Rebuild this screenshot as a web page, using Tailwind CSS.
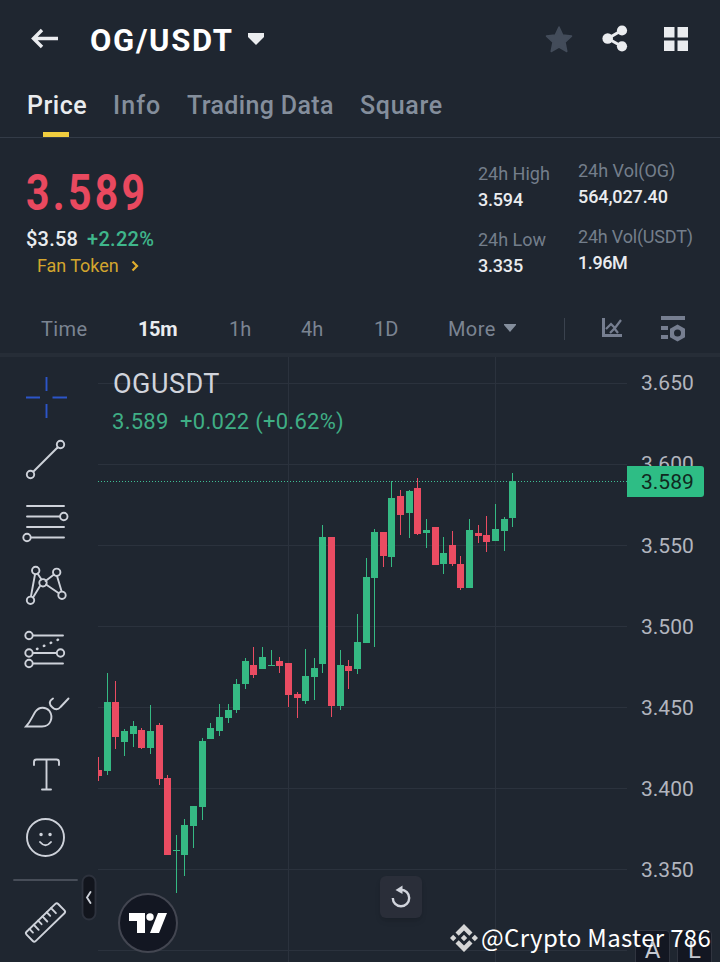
<!DOCTYPE html>
<html lang="en">
<head>
	<title>OG/USDT</title>
	<meta charset="UTF-8"/>
	<meta name="viewport" content="width=device-width, initial-scale=1.0"/>
	<script src="https://cdn.jsdelivr.net/npm/@tailwindcss/browser@4"></script>
</head>
<body class="relative flex h-[962px] w-[720px] flex-col overflow-hidden bg-[#1f2630] font-[Roboto,sans-serif] text-[#eaecef]">
	<!-- Header -->
	<header class="flex h-[78px] shrink-0 items-center pl-[30px] pr-[32px]">
		<svg class="h-6 w-[30px]" viewBox="0 0 30 24" fill="none" stroke="#eaecef" stroke-width="3.4"><path d="M28 11.500H4M12 3L3.500 11.500L12 20"/></svg>
		<h1 class="ml-[30px] w-[145px] whitespace-nowrap text-[31px] leading-[44px] font-bold tracking-[1.7px] text-white pt-[3px]">OG/USDT</h1>
		<svg class="ml-[12px] h-[14px] w-[18px]" viewBox="0 0 18 14" fill="#eaecef"><path d="M1 1h16v4L9 13L1 5z"/></svg>
		<div class="ml-auto flex items-center">
			<svg class="h-[28px] w-[28px]" viewBox="0 0 28 28" fill="#434c5a" stroke="#434c5a" stroke-width="1.5" stroke-linejoin="round"><path d="M14 2l3.700 8.100 8.800 1-6.500 6 1.800 9.400L14 22l-7.800 4.500 1.800-9.400-6.500-6 8.800-1z"/></svg>
			<svg class="ml-[28px] h-7 w-7" viewBox="0 0 28 28" fill="#eaecef"><path d="M20.500 5.500L7 13.500l14 8" fill="none" stroke="#eaecef" stroke-width="3"/><circle cx="21" cy="5.500" r="5.100"/><circle cx="6.700" cy="13.500" r="5.300"/><circle cx="21" cy="21.300" r="5.100"/></svg>
			<svg class="ml-[35px] h-6 w-6" viewBox="0 0 24 24" fill="#eaecef"><path d="M0 0h10.500v10.500H0zM13.500 0H24v10.500H13.500zM0 13.500h10.500V24H0zM13.500 13.500H24V24H13.500z"/></svg>
		</div>
	</header>

	<!-- Tabs -->
	<nav class="flex h-[60px] shrink-0 border-b border-[#333b47] pl-[27px] text-[25px] leading-[56px] font-medium whitespace-nowrap text-[#848e9c]">
		<div class="flex w-[86px] flex-col">
			<span class="h-[54px] tracking-[.5px] text-[#eaecef]">Price</span>
			<span class="ml-4 h-[5px] w-[26px] bg-[#f0cd3f]"></span>
		</div>
		<span class="w-[74px] tracking-[1.1px]">Info</span>
		<span class="w-[173px] tracking-[.35px]">Trading Data</span>
		<span class="tracking-[.7px]">Square</span>
	</nav>

	<!-- Price and 24h figures -->
	<section class="flex h-[162px] shrink-0">
		<div class="w-[478px] pl-[26px] pt-[25px]">
			<p class="h-[62px] origin-left scale-x-[.82] text-[50px] leading-[61px] font-bold tracking-[4px] text-[#e9495f]">3.589</p>
			<p class="flex h-[27px] text-[20px] leading-[29px] font-medium"><span class="w-[61px] tracking-[.2px]">$3.58</span><span class="tracking-[.3px] text-[#3fb68b]">+2.22%</span></p>
			<p class="flex h-[27px] items-center pl-[11px] text-[18px] leading-[27px] text-[#d3a52e]"><span class="w-[94px] tracking-[-.05px]">Fan Token</span><svg class="h-3 w-2" viewBox="0 0 8 12" fill="none" stroke="#e0ad2d" stroke-width="2.200"><path d="M1.500 1.500L6 6l-4.500 4.500"/></svg></p>
		</div>
		<dl class="w-[100px] pt-[23px] text-[18px] leading-[26px] whitespace-nowrap">
			<dt class="text-[#747e8b]">24h High</dt><dd class="mb-[14px] font-medium tracking-[-.2px]">3.594</dd>
			<dt class="text-[#747e8b]">24h Low</dt><dd class="font-medium tracking-[-.2px]">3.335</dd>
		</dl>
		<dl class="pt-[20px] text-[18px] leading-[26px] whitespace-nowrap">
			<dt class="text-[#747e8b]">24h Vol(OG)</dt><dd class="mb-[14px] font-medium tracking-[-.1px]">564,027.40</dd>
			<dt class="tracking-[-.2px] text-[#747e8b]">24h Vol(USDT)</dt><dd class="font-medium tracking-[-.4px]">1.96M</dd>
		</dl>
	</section>

	<!-- Intervals -->
	<nav class="flex h-[57px] shrink-0 items-center border-b-4 border-[#262d37] pl-[41px] text-[20px] text-[#7b8492] whitespace-nowrap pt-1">
		<span class="w-[97px] tracking-[.4px]">Time</span>
		<span class="w-[91px] font-bold tracking-[-.4px] text-[#eaecef]">15m</span>
		<span class="w-[72px]">1h</span>
		<span class="w-[73px]">4h</span>
		<span class="w-[74px]">1D</span>
		<span class="w-[56px] tracking-[.4px]">More</span>
		<svg class="h-[10px] w-3" viewBox="0 0 12 10" fill="#848e9c"><path d="M0 0h12v1L6 8L0 1z"/></svg>
		<span class="ml-[48px] h-[22px] w-px bg-[#3a424e]"></span>
		<svg class="ml-[36px] h-[22px] w-[22px]" viewBox="0 0 22 22" fill="none" stroke="#767e90" stroke-width="3"><path d="M2.500 0v17.500H21"/><path d="M5 11l5-5 4 4 6-8M9 15l4.500-4.500 3.500 4.500" stroke-width="2.200"/></svg>
		<svg class="ml-[37px] h-[28px] w-[26px]" viewBox="0 0 26 28" fill="#767e90"><path d="M1 1h24v4H1zM1 11h7v4H1zM1 20h7v4H1z"/><path fill-rule="evenodd" d="M17.500 9.500l7.500 4.300v8.400l-7.500 4.300-7.500-4.300v-8.400zM17.500 14.500a3.500 3.500 0 1 0 0 7 3.500 3.500 0 1 0 0-7z"/></svg>
	</nav>

	<main class="flex h-[605px] shrink-0">
		<!-- Drawing tools -->
		<svg class="h-[605px] w-[98px] shrink-0" viewBox="0 357 98 605" fill="none" stroke="#ced2da" stroke-width="1.900" stroke-linecap="round">
			<path d="M46.500 377v14M46.500 404v14M26 397.500h14M52.500 397.500h14.500" stroke="#2c55c8" stroke-linecap="butt"/>
			<path d="M33.500 471.500L57.500 447.500"/><circle cx="60.500" cy="444.500" r="3.700"/><circle cx="30.500" cy="474.500" r="3.700"/>
			<path d="M27 506h37M27 516.500h33M27 527h37M31 537.500h33"/><circle cx="63.800" cy="516.500" r="3.700"/><circle cx="27" cy="537.500" r="3.700"/>
			<path d="M35 574.500L31 596M37.500 573.500l4 6M40 586L33 597.500M45.500 581l8.500-6.500M57 576l4.500 15M46 584.500l12.500 8.500"/>
			<circle cx="35.700" cy="570.500" r="3.700"/><circle cx="56.700" cy="572.300" r="3.700"/><circle cx="43" cy="582.800" r="3.700"/><circle cx="30.500" cy="600.300" r="3.700"/><circle cx="62" cy="595.300" r="3.700"/>
			<path d="M33 635.500h30M33 653h23M33 663.500h30"/><path d="M37 649L63 637.500" stroke-width="2.500" stroke-dasharray="0.500 7"/>
			<circle cx="29" cy="635.500" r="3.700"/><circle cx="29" cy="653" r="3.700"/><circle cx="60.500" cy="653" r="3.700"/><circle cx="29" cy="663.500" r="3.700"/>
			<path d="M26 726.500C31 721 33 715 35.500 711.500C39 706.500 46 706.500 49.500 711C53.500 717 51 726.500 42 726.500zM53 698.500C48.500 701.500 49 704.500 52.500 707.500C55 710 58 710 60.500 707L68.500 698.500"/>
			<path d="M34 765v-3q0-2.500 2.500-2.500h20q2.500 0 2.500 2.500v3M46.500 760v29.500M42 789.500h9"/>
			<circle cx="45.500" cy="837.500" r="18.500"/><path d="M40 842q5.500 6.500 11 0"/><path d="M41 834.500h.1M50 834.500h.1" stroke-width="3.400"/>
			<path d="M14 880h63" stroke="#474d58"/>
			<rect x="82.500" y="875.500" width="13" height="44" rx="6.500" fill="#12151d" stroke="#2d323d"/><path d="M90.500 892l-3.500 5.500 3.500 5.500"/>
			<g transform="rotate(-44 45.500 922.500)"><rect x="23.500" y="916" width="44" height="13" rx="2"/><path d="M29.500 916v5M35.500 916v7M41.500 916v5M47.500 916v7M53.500 916v5M59.500 916v7"/></g>
		</svg>

		<!-- Candles -->
		<div class="relative w-[529px] shrink-0">
			<svg id="chart" class="h-[605px] w-[529px]" viewBox="98 357 529 605" shape-rendering="crispEdges">
				<path d="M98 383.500h529M98 464.500h529M98 545.500h529M98 626.500h529M98 707.500h529M98 788.500h529M98 869.500h529M98 950.500h529M288.500 357v605M495.500 357v605" stroke="#2b323d"/>
				<path d="M98 481.500h529" stroke="#3fbf94" stroke-dasharray="1 2"/>
			</svg>
			<p class="absolute left-[15px] top-[10px] text-[27px] leading-[34px] tracking-[.5px] text-[#d1d4dc]">OGUSDT</p>
			<p class="absolute left-[14px] top-[50px] text-[22px] leading-[30px] tracking-[.27px] whitespace-pre text-[#3fae85]">3.589  +0.022 (+0.62%)</p>
			<div class="absolute left-[20px] top-[536px] flex h-[60px] w-[60px] items-center justify-center rounded-full border-2 border-[#434651] bg-[#131722]">
				<svg class="h-5 w-[38px]" viewBox="0 0 38 20" fill="#fff"><path d="M0 0h16v20H8V8H0z"/><circle cx="21" cy="4" r="3.700"/><path d="M29 0h9l-8 20h-9z"/></svg>
			</div>
			<div class="absolute left-[282px] top-[519px] flex h-[42px] w-[42px] items-center justify-center rounded-md bg-[#2a2e39] shadow-md">
				<svg class="h-6 w-6" viewBox="0 0 24 24" fill="none" stroke="#d1d4dc" stroke-width="2.400"><path d="M3.800 13a8.200 8.200 0 1 0 8.200-8.200"/><path d="M13.500 .5v8.500L6.500 5z" fill="#d1d4dc" stroke="none"/></svg>
			</div>
		</div>

		<!-- Price scale -->
		<div class="relative flex flex-1 flex-col overflow-hidden pl-[14px] pt-[10px] text-[21px] leading-[32px] text-[#b2b5be]">
			<span class="mb-[49px]">3.650</span>
			<span class="mb-[50px]">3.600</span>
			<span class="mb-[49px]">3.550</span>
			<span class="mb-[49px]">3.500</span>
			<span class="mb-[49px]">3.450</span>
			<span class="mb-[49px]">3.400</span>
			<span>3.350</span>
			<span class="absolute left-0 top-[109px] h-[31px] w-[77px] rounded-r-[3px] bg-[#2ebd85] pl-[14px] leading-[32px] text-[#10291f]">3.589</span>
			<div class="absolute left-2 top-[573px] flex gap-[7px] text-center text-[24px] leading-[38px] text-[#c5c8d0]">
				<span class="h-10 w-[35px] rounded-[4px] border border-[#30343f] bg-[#131722]">A</span>
				<span class="h-10 w-[35px] rounded-[4px] border border-[#30343f] bg-[#131722]">L</span>
			</div>
		</div>
	</main>

	<!-- Author tag -->
	<div class="absolute left-[450px] top-[919px] flex items-center whitespace-nowrap">
		<svg class="mt-[2px] h-7 w-7" viewBox="0 0 28 28" fill="#d6d6d6"><path d="M14 0l8.500 8.500-3.200 3.200L14 6.400l-5.300 5.300-3.200-3.200zM14 28l8.500-8.500-3.200-3.200L14 21.600l-5.300-5.300-3.200 3.200zM14 10.800l3.200 3.200-3.200 3.200-3.200-3.200zM3.200 10.800L6.400 14l-3.200 3.200L0 14zM24.800 10.800L28 14l-3.200 3.200-3.200-3.200z"/></svg>
		<span class="ml-[3px] font-['Noto_Sans_CJK_SC',sans-serif] text-[24px] leading-[36px] tracking-[.35px] text-white">@Crypto Master 786</span>
	</div>

	<script>
		// x, high, body top, body bottom, low, rising
		var candles = [
			[107,673,702,771,775,1],[115,681,702,737,749,0],[124,729,731,742,756,1],[133,721,726,734,747,1],
			[141,728,730,748,749,0],[150,705,731,748,754,1],[159,723,725,779,785,0],[167,775,778,855,855,0],
			[176,835,850,851,893,1],[184,819,825,855,876,1],[193,806,806,826,848,1],[202,738,741,807,820,1],
			[210,723,728,739,739,1],[219,704,717,731,736,1],[228,704,710,718,723,1],[236,679,684,710,713,1],
			[245,658,661,684,689,1],[253,647,665,675,678,0],[262,647,657,669,669,1],[271,650,665,666,666,1],
			[279,657,661,666,673,0],[288,663,663,695,707,0],[297,692,694,698,718,0],[305,649,676,701,704,1],
			[314,658,668,677,700,1],[322,525,537,664,673,1],[331,537,537,706,717,0],[340,650,665,706,710,1],
			[348,660,666,671,689,0],[357,614,642,669,674,1],[366,558,577,643,643,1],[374,529,532,578,647,1],
			[383,532,532,556,567,0],[391,481,498,557,567,1],[400,490,496,515,535,0],[409,490,491,513,538,1],
			[417,478,488,534,535,0],[426,519,530,533,548,1],[435,527,527,565,565,0],[443,537,553,564,574,1],
			[452,531,545,564,566,0],[460,556,564,588,590,0],[469,519,530,588,588,1],[478,525,533,536,543,0],
			[486,516,535,542,552,0],[495,504,529,541,541,1],[504,517,519,531,551,1],[512,473,481,518,527,1]
		]
		// The first candle is cut by the left edge of the chart
		var html = '<path fill="#ea4c62" d="M98 757h1v24h-1zM98 770h4v6h-4z"/>'
		candles.forEach(([x, high, top, bottom, low, up]) => {
			html += `<path fill="${up ? '#35b983' : '#ea4c62'}" d="M${x} ${high}h1V${low}h-1zM${x - 3} ${top}h7V${bottom}h-7z"/>`
		})
		document.getElementById('chart').insertAdjacentHTML('beforeend', html)
	</script>
</body>
</html>
